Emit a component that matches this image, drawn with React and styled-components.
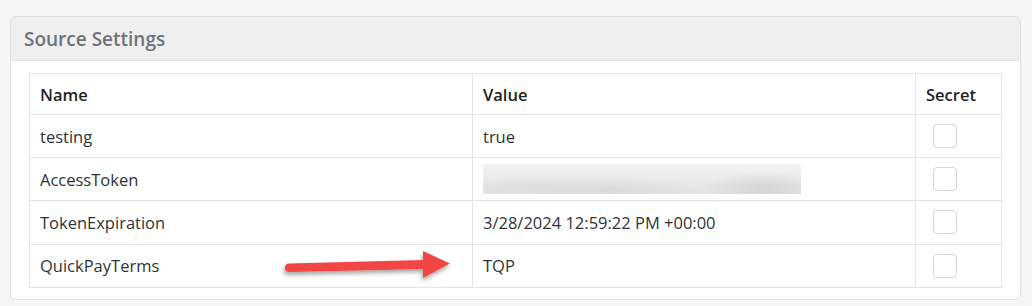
import React from "react";
import styled, { createGlobalStyle } from "styled-components";

const GlobalStyle = createGlobalStyle`
  html, body {
    margin: 0;
    padding: 0;
    background: #f5f6f6;
    font-family: "Open Sans", "Noto Sans", Arial, sans-serif;
  }
`;

const Page = styled.div`
  position: relative;
  width: 1032px;
  height: 306px;
  padding: 16px 11px 0 10px;
  box-sizing: border-box;
`;

const Card = styled.section`
  background: #fff;
  border: 1px solid #dfe2e5;
  border-radius: 5px;
  overflow: hidden;
`;

const CardHeader = styled.header`
  height: 43px;
  display: flex;
  align-items: center;
  padding: 0 13px;
  background: #efefef;
  border-bottom: 1px solid #dfe2e5;
  color: #6c757d;
  font-size: 19px;
  font-weight: 600;
`;

const CardBody = styled.div`
  padding: 12px 18px 11px 18px;
`;

const Table = styled.table`
  width: 100%;
  border-collapse: collapse;
  table-layout: fixed;
  color: #2f3337;
  font-size: 16.5px;

  th, td {
    border: 1px solid #e2e5e8;
    padding: 0 10px;
    text-align: left;
    vertical-align: middle;
  }

  th {
    height: 40px;
    font-weight: 600;
    color: #1f2326;
  }

  td {
    height: 42.2px;
  }
`;

const SecretCell = styled.td`
  && {
    padding-left: 17px;
  }
`;

const Checkbox = styled.span`
  display: block;
  width: 24px;
  height: 24px;
  box-sizing: border-box;
  border: 1px solid #d3d7db;
  border-radius: 4px;
  background: #fff;
`;

// masked secret value
const Redacted = styled.div`
  width: 318px;
  height: 30px;
  background:
    radial-gradient(ellipse 60px 16px at 88% 80%, rgba(200, 200, 200, 0.6), transparent),
    radial-gradient(ellipse 90px 14px at 40% 85%, rgba(210, 210, 210, 0.55), transparent),
    radial-gradient(ellipse 70px 12px at 15% 75%, rgba(212, 212, 212, 0.5), transparent),
    linear-gradient(180deg, #f2f2f2 0%, #e9e9e9 60%, #e2e2e2 100%);
  filter: blur(0.6px);
`;

const Arrow = styled.svg`
  position: absolute;
  left: 278px;
  top: 246px;
  overflow: visible;
`;

const rows = [
  { name: "testing", value: "true" },
  { name: "AccessToken", value: null },
  { name: "TokenExpiration", value: "3/28/2024 12:59:22 PM +00:00" },
  { name: "QuickPayTerms", value: "TQP" },
];

export default function App() {
  return (
    <Page>
      <GlobalStyle />
      <Card>
        <CardHeader>Source Settings</CardHeader>
        <CardBody>
          <Table>
            <colgroup>
              <col style={{ width: 443 }} />
              <col style={{ width: 443 }} />
              <col />
            </colgroup>
            <thead>
              <tr>
                <th>Name</th>
                <th>Value</th>
                <th>Secret</th>
              </tr>
            </thead>
            <tbody>
              {rows.map((r) => (
                <tr key={r.name}>
                  <td>{r.name}</td>
                  <td>{r.value ?? <Redacted />}</td>
                  <SecretCell>
                    <Checkbox />
                  </SecretCell>
                </tr>
              ))}
            </tbody>
          </Table>
        </CardBody>
      </Card>
      <Arrow width="180" height="40" viewBox="0 0 180 40">
        <defs>
          <filter id="arrowShadow" x="-10%" y="-40%" width="130%" height="190%">
            <feDropShadow dx="-1" dy="3" stdDeviation="2" floodColor="#000" floodOpacity="0.35" />
          </filter>
        </defs>
        <g filter="url(#arrowShadow)">
          <path
            d="M11 17.5 L145 14 L145 5 L172 17.5 L145 32 L145 23 L11 26 A4.25 4.25 0 0 1 11 17.5 Z"
            fill="#f24545"
          />
        </g>
      </Arrow>
    </Page>
  );
}
